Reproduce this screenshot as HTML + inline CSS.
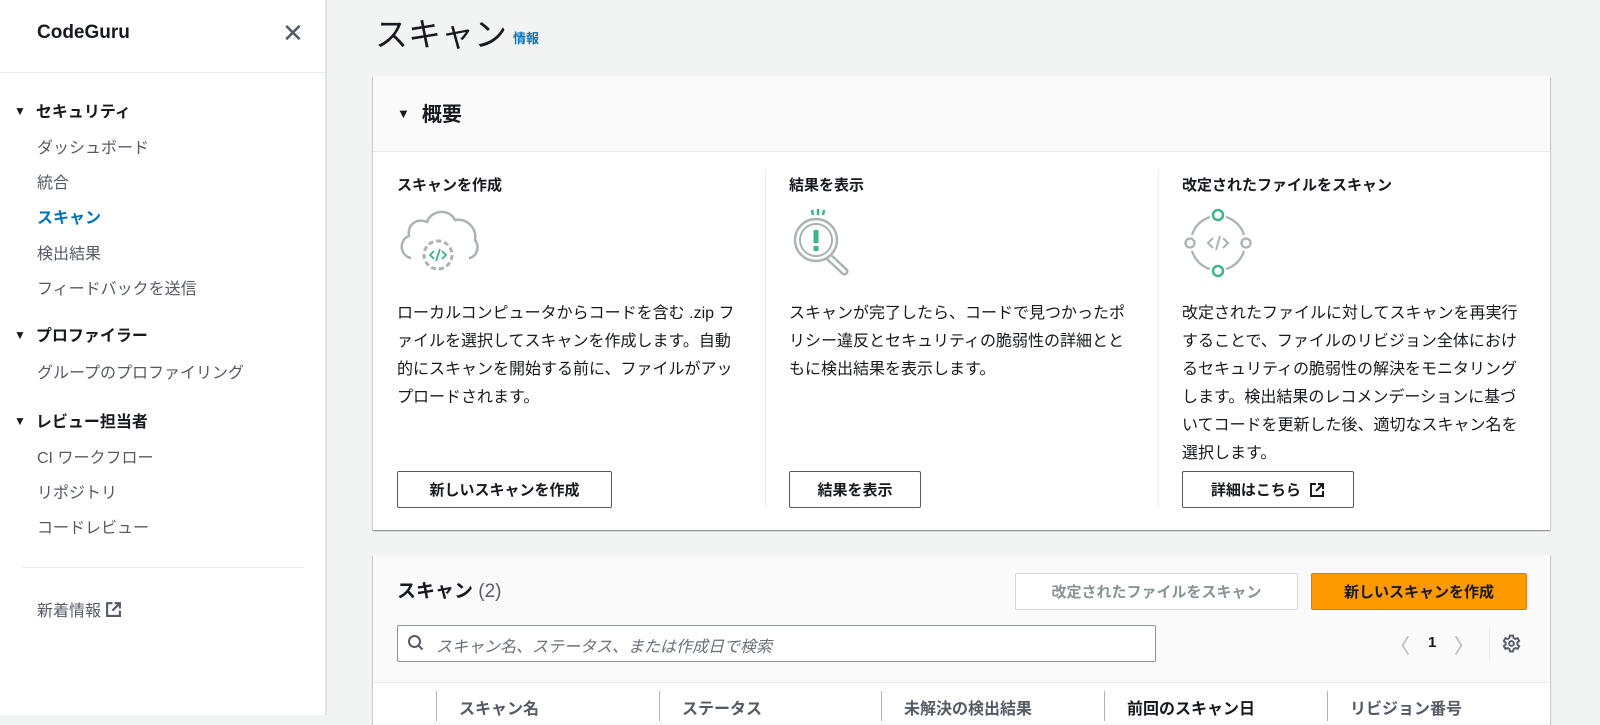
<!DOCTYPE html>
<html><head><meta charset="utf-8"><style>
*{box-sizing:border-box;margin:0;padding:0}
body{width:1600px;height:715px;overflow:hidden;background:#f2f3f3;font-family:"Liberation Sans","Noto Sans CJK JP",sans-serif;color:#16191f;position:relative}
.side{position:absolute;left:0;top:0;width:327px;height:715px;background:#fff;border-right:2px solid #dfe2e2}
.side .t{position:absolute;left:37px;top:22px;font-size:19px;font-weight:bold}
.side .x{position:absolute;left:282px;top:18px;font-size:26px;color:#545b64}
.side .hr{position:absolute;left:0;top:72px;width:325px;border-top:1px solid #eaeded}
.side .s{position:absolute;left:14px;font-size:16px;font-weight:bold}
.side .s:before{content:"▼";font-size:12px;margin-right:10px;position:relative;top:-2px}
.side .i{position:absolute;left:37px;font-size:16px;color:#545b64}
.side .hr2{position:absolute;left:22px;top:567px;width:282px;border-top:1px solid #eaeded}
h1{position:absolute;left:375px;top:8px;font-size:33px;font-weight:normal}
.info{position:absolute;left:513px;top:28px;font-size:13px;font-weight:bold;color:#0073bb}
.card{position:absolute;left:373px;width:1177px;background:#fff;box-shadow:0 1px 1px 0 rgba(0,28,36,.3),1px 1px 1px 0 rgba(0,28,36,.15),-1px 1px 1px 0 rgba(0,28,36,.15)}
.c1{top:76px;height:454px}
.c1 .hd{height:76px;background:#fafafa;border-bottom:1px solid #eaeded;position:relative}
.c1 .hd span{position:absolute;left:24px;top:22px;font-size:20px;font-weight:bold}
.c1 .hd span:before{content:"▼";font-size:13px;margin-right:12px;position:relative;top:-3px}
.col{position:absolute;top:76px;height:378px}
.col .ct{position:absolute;font-size:15px;font-weight:bold}
.col .tx{position:absolute;font-size:16px;line-height:28px;color:#16191f}
.col svg{position:absolute}
.btn{position:absolute;height:37px;border:1px solid #545b64;border-radius:2px;background:#fff;font-size:15px;font-weight:bold;color:#545b64;display:flex;align-items:center;justify-content:center}
.div{position:absolute;top:94px;height:338px;border-left:1px solid #eaeded}
.c2{top:555px;height:170px;background:#fafafa}
</style></head><body>
<div class="side">
<div class="t">CodeGuru</div><div class="x">✕</div><div class="hr"></div>
<div class="s" style="top:98px">セキュリティ</div>
<div class="i" style="top:134px">ダッシュボード</div>
<div class="i" style="top:169px">統合</div>
<div class="i" style="top:204px;color:#0073bb;font-weight:bold">スキャン</div>
<div class="i" style="top:240px">検出結果</div>
<div class="i" style="top:275px">フィードバックを送信</div>
<div class="s" style="top:322px">プロファイラー</div>
<div class="i" style="top:359px">グループのプロファイリング</div>
<div class="s" style="top:408px">レビュー担当者</div>
<div class="i" style="top:444px">CI ワークフロー</div>
<div class="i" style="top:479px">リポジトリ</div>
<div class="i" style="top:514px">コードレビュー</div>
<div class="hr2"></div>
<div class="i" style="top:597px">新着情報 <svg width="17" height="17" viewBox="0 0 16 16" style="vertical-align:-2px"><path d="M7 2H2v12h12V9M9 2h5v5M14 2L7 9" fill="none" stroke="#545b64" stroke-width="2"/></svg></div>
</div>
<h1>スキャン</h1><div class="info">情報</div>
<div class="card c1">
<div class="hd"><span>概要</span></div>
<div class="div" style="left:392px"></div><div class="div" style="left:785px"></div>
</div>
<div class="card" style="top:76px;height:454px;background:transparent;box-shadow:none">
<div class="col" style="left:24px;width:350px">
<div class="ct" style="top:22px">スキャンを作成</div>
<svg style="top:54px" width="84" height="66" viewBox="0 0 84 66"><path d="M14 52C3 50 1 34 12 30C10 18 20 12 30 16C34 4 52 2 58 14C70 12 80 22 78 34C84 42 78 52 72 52" fill="none" stroke="#aab4b4" stroke-width="2.5"/><circle cx="41" cy="49" r="14" fill="#fff" stroke="#aab4b4" stroke-width="3" stroke-dasharray="5 3"/><path d="M37 45l-4 4 4 4M45 45l4 4-4 4M43 43l-4 12" fill="none" stroke="#3eb489" stroke-width="1.8"/></svg>
<div class="tx" style="top:148px;width:346px">ローカルコンピュータからコードを含む .zip ファイルを選択してスキャンを作成します。自動的にスキャンを開始する前に、ファイルがアップロードされます。</div>
</div>
<div class="col" style="left:416px;width:350px">
<div class="ct" style="top:22px">結果を表示</div>
<svg style="top:54px" width="70" height="72" viewBox="0 0 70 72"><path d="M23 4l1 5M29 3v6M35 4l-1 5" stroke="#3eb489" stroke-width="2.5"/><circle cx="27" cy="34" r="21" fill="none" stroke="#aab4b4" stroke-width="2.5"/><circle cx="27" cy="34" r="16" fill="none" stroke="#aab4b4" stroke-width="2"/><path d="M42 49l16 15a3 3 0 0 1-4 4L38 53" fill="none" stroke="#aab4b4" stroke-width="2.5"/><rect x="24.5" y="24" width="5" height="13" fill="#3eb489"/><rect x="24.5" y="40" width="5" height="5" fill="#3eb489"/></svg>
<div class="tx" style="top:148px;width:346px">スキャンが完了したら、コードで見つかったポリシー違反とセキュリティの脆弱性の詳細とともに検出結果を表示します。</div>
</div>
<div class="col" style="left:809px;width:350px">
<div class="ct" style="top:22px">改定されたファイルをスキャン</div>
<svg style="top:56px" width="72" height="70" viewBox="0 0 72 70"><circle cx="36" cy="7" r="5" fill="none" stroke="#3eb489" stroke-width="2.5"/><circle cx="36" cy="63" r="5" fill="none" stroke="#3eb489" stroke-width="2.5"/><circle cx="8" cy="35" r="4.5" fill="none" stroke="#aab4b4" stroke-width="2.3"/><circle cx="64" cy="35" r="4.5" fill="none" stroke="#aab4b4" stroke-width="2.3"/><path d="M28 9A27 27 0 0 0 10 27M44 9A27 27 0 0 1 62 27M10 43A27 27 0 0 0 28 61M62 43A27 27 0 0 1 44 61" fill="none" stroke="#aab4b4" stroke-width="2.3"/><path d="M31 30l-5 5 5 5M41 30l5 5-5 5M38 28l-4 14" fill="none" stroke="#aab4b4" stroke-width="2"/></svg>
<div class="tx" style="top:148px;width:346px">改定されたファイルに対してスキャンを再実行することで、ファイルのリビジョン全体におけるセキュリティの脆弱性の解決をモニタリングします。検出結果のレコメンデーションに基づいてコードを更新した後、適切なスキャン名を選択します。</div>
</div>
</div>
<div class="btn" style="left:397px;top:471px;width:215px;color:#16191f">新しいスキャンを作成</div>
<div class="btn" style="left:789px;top:471px;width:132px;color:#16191f">結果を表示</div>
<div class="btn" style="left:1182px;top:471px;width:172px;color:#16191f">詳細はこちら&nbsp;&nbsp;<svg width="16" height="16" viewBox="0 0 16 16"><path d="M7 2H2v12h12V9M9 2h5v5M14 2L7 9" fill="none" stroke="#16191f" stroke-width="2"/></svg></div>
<div class="card c2"></div>
<div style="position:absolute;left:397px;top:576px;font-size:19px;font-weight:bold">スキャン <span style="font-weight:normal;color:#545b64">(2)</span></div>
<div class="btn" style="left:1015px;top:573px;width:283px;border-color:#d5dbdb;color:#879596">改定されたファイルをスキャン</div>
<div class="btn" style="left:1311px;top:573px;width:216px;border-color:#ec7211;background:#ff9900;color:#16191f">新しいスキャンを作成</div>
<div style="position:absolute;left:397px;top:625px;width:759px;height:37px;border:1px solid #879596;border-radius:2px;background:#fff;font-size:16px;font-style:italic;color:#687078;padding:7px 0 0 38px">スキャン名、ステータス、または作成日で検索</div>
<svg style="position:absolute;left:407px;top:634px" width="18" height="18" viewBox="0 0 18 18"><circle cx="7.5" cy="7.5" r="5.5" fill="none" stroke="#545b64" stroke-width="2"/><path d="M11.5 11.5l4 4" stroke="#545b64" stroke-width="2"/></svg>
<div style="position:absolute;left:1390px;top:630px;font-size:20px;color:#aab7b8">〈</div>
<div style="position:absolute;left:1428px;top:634px;font-size:15px;font-weight:bold">1</div>
<div style="position:absolute;left:1454px;top:630px;font-size:20px;color:#aab7b8">〉</div>
<div style="position:absolute;left:1489px;top:627px;height:34px;border-left:1px solid #eaeded"></div>
<svg style="position:absolute;left:1502px;top:634px" width="19" height="19" viewBox="0 0 24 24"><path d="M10 2h4l.6 3 2.2 1.3 2.9-1 2 3.4-2.3 2v2.6l2.3 2-2 3.4-2.9-1-2.2 1.3-.6 3h-4l-.6-3-2.2-1.3-2.9 1-2-3.4 2.3-2v-2.6l-2.3-2 2-3.4 2.9 1L9.4 5z" fill="none" stroke="#545b64" stroke-width="2.4"/><circle cx="12" cy="12" r="3" fill="none" stroke="#545b64" stroke-width="2.4"/></svg>
<div style="position:absolute;left:373px;top:682px;width:1177px;height:40px;background:#fff;border-top:1px solid #eaeded;overflow:hidden;font-size:16px;font-weight:bold;color:#545b64">
<div style="position:absolute;left:63px;top:8px;height:30px;border-left:1px solid #aab7b8"></div>
<div style="position:absolute;left:286px;top:8px;height:30px;border-left:1px solid #aab7b8"></div>
<div style="position:absolute;left:508px;top:8px;height:30px;border-left:1px solid #aab7b8"></div>
<div style="position:absolute;left:731px;top:8px;height:30px;border-left:1px solid #aab7b8"></div>
<div style="position:absolute;left:954px;top:8px;height:30px;border-left:1px solid #aab7b8"></div>
<div style="position:absolute;left:86px;top:12px">スキャン名</div>
<div style="position:absolute;left:309px;top:12px">ステータス</div>
<div style="position:absolute;left:531px;top:12px">未解決の検出結果</div>
<div style="position:absolute;left:754px;top:12px;color:#16191f">前回のスキャン日</div>
<div style="position:absolute;left:977px;top:12px">リビジョン番号</div>
</div>
</body></html>
